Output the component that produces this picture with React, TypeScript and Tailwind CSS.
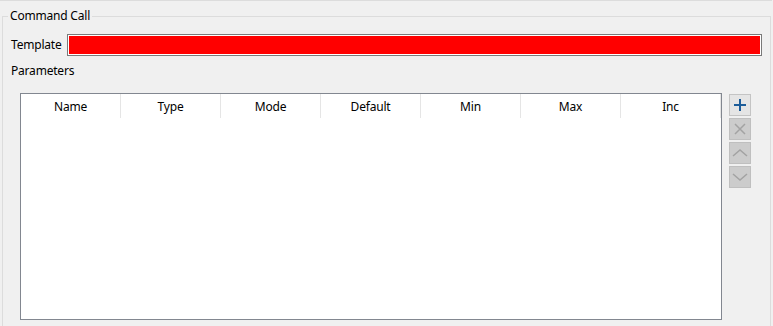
import React from "react";

const columns = ["Name", "Type", "Mode", "Default", "Min", "Max", "Inc"];

function ToolButton({
  disabled,
  children,
}: {
  disabled?: boolean;
  children: React.ReactNode;
}) {
  return (
    <button
      type="button"
      disabled={disabled}
      className={
        disabled
          ? "w-[22px] h-[22px] flex items-center justify-center border border-[#bfbfbf] bg-[#cccccc]"
          : "w-[22px] h-[22px] flex items-center justify-center border border-[#c4c4c4] bg-[#e5e5e5]"
      }
    >
      {children}
    </button>
  );
}

export default function App() {
  return (
    <div
      className="w-[773px] h-[326px] bg-[#f0f0f0] overflow-hidden text-[12px] tracking-[-0.2px] text-black"
      style={{ fontFamily: '"Noto Sans", "Segoe UI", sans-serif' }}
    >
      {/* previous group bottom edge */}
      <div className="w-[772px] h-px bg-[#dcdcdc]" />

      {/* Command Call group */}
      <fieldset className="ml-[2px] mt-[7px] w-[769px] h-[330px] border border-[#dcdcdc]">
        <legend className="ml-[5px] px-[2px] leading-[16px]">Command Call</legend>

        {/* Template row */}
        <div className="flex items-center mt-[10px] pl-[8px]">
          <span className="w-[56px] leading-[16px]">Template</span>
          <div className="w-[695px] h-[22px] border border-[#7a7a7a] bg-white p-px">
            <div className="w-full h-full bg-[#ff0000]" />
          </div>
        </div>

        <div className="mt-[7px] pl-[8px] leading-[16px]">Parameters</div>

        {/* Parameters table + buttons */}
        <div className="flex mt-[14px] ml-[17px] gap-[7px]">
          <div className="w-[702px] h-[227px] border border-[#828790] bg-white">
            <div className="flex h-[24px]">
              {columns.map((c) => (
                <div
                  key={c}
                  className="w-[100px] h-[24px] pt-[2px] flex items-center justify-center border-r border-[#e5e5e5] leading-[16px]"
                >
                  {c}
                </div>
              ))}
            </div>
          </div>

          <div className="flex flex-col gap-[2px] mt-px">
            <ToolButton>
              <svg width="14" height="14" viewBox="0 0 14 14">
                <path d="M7 1v12M1 7h12" stroke="#1c5c99" strokeWidth="2" fill="none" />
              </svg>
            </ToolButton>
            <ToolButton disabled>
              <svg width="12" height="12" viewBox="0 0 12 12">
                <path d="M1 1l10 10M11 1L1 11" stroke="#a3a3a3" strokeWidth="1.5" fill="none" />
              </svg>
            </ToolButton>
            <ToolButton disabled>
              <svg width="16" height="10" viewBox="0 0 16 10">
                <path d="M1 8l7-6 7 6" stroke="#a3a3a3" strokeWidth="1.5" fill="none" />
              </svg>
            </ToolButton>
            <ToolButton disabled>
              <svg width="16" height="10" viewBox="0 0 16 10">
                <path d="M1 2l7 6 7-6" stroke="#a3a3a3" strokeWidth="1.5" fill="none" />
              </svg>
            </ToolButton>
          </div>
        </div>
      </fieldset>
    </div>
  );
}
